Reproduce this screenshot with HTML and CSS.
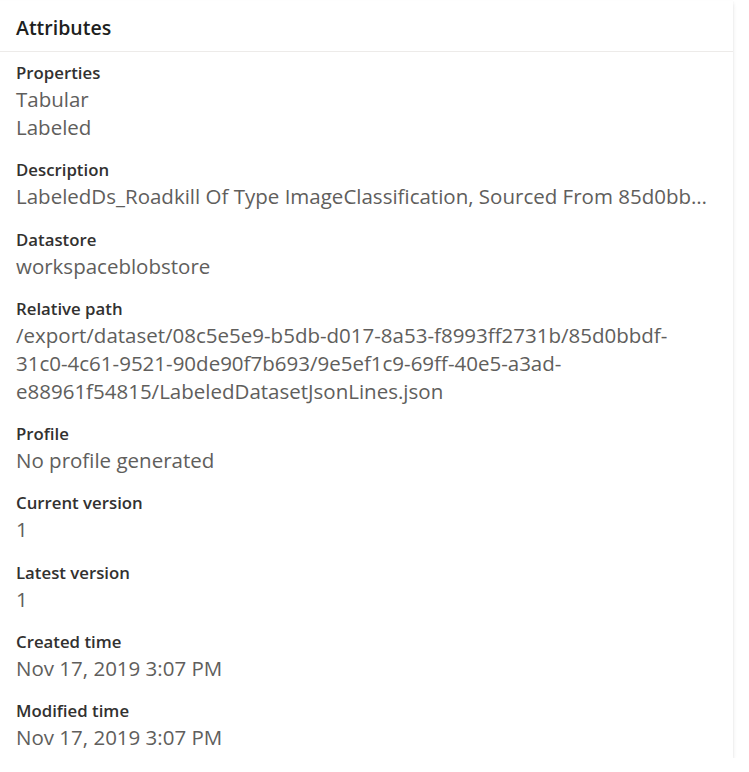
FILE: index.html
```html
<!DOCTYPE html>
<html lang="en">
<head>
<meta charset="utf-8">
<title>Attributes</title>
<link rel="stylesheet" href="styles.css">
</head>
<body>
<section class="card">
  <header class="card-header">
    <h2 class="card-title">Attributes</h2>
  </header>
  <div class="card-body">
    <div class="field">
      <div class="field-label">Properties</div>
      <div class="field-value">Tabular</div>
      <div class="field-value">Labeled</div>
    </div>
    <div class="field">
      <div class="field-label">Description</div>
      <div class="field-value truncate">LabeledDs_Roadkill Of Type ImageClassification, Sourced From 85d0bbdf-31c0-4c61-9521-90de90f7b693</div>
    </div>
    <div class="field">
      <div class="field-label">Datastore</div>
      <div class="field-value">workspaceblobstore</div>
    </div>
    <div class="field">
      <div class="field-label">Relative path</div>
      <div class="field-value path">/export/dataset/08c5e5e9-b5db-d017-8a53-f8993ff2731b/85d0bbdf-31c0-4c61-9521-90de90f7b693/9e5ef1c9-69ff-40e5-a3ad-e88961f54815/LabeledDatasetJsonLines.json</div>
    </div>
    <div class="field">
      <div class="field-label">Profile</div>
      <div class="field-value">No profile generated</div>
    </div>
    <div class="field">
      <div class="field-label">Current version</div>
      <div class="field-value">1</div>
    </div>
    <div class="field">
      <div class="field-label">Latest version</div>
      <div class="field-value">1</div>
    </div>
    <div class="field">
      <div class="field-label">Created time</div>
      <div class="field-value">Nov 17, 2019 3:07 PM</div>
    </div>
    <div class="field">
      <div class="field-label">Modified time</div>
      <div class="field-value">Nov 17, 2019 3:07 PM</div>
    </div>
  </div>
</section>
</body>
</html>
```

FILE: styles.css
```css
html, body {
  margin: 0;
  padding: 0;
  background: #ffffff;
}

body {
  font-family: "Segoe UI", "Open Sans", "Noto Sans", sans-serif;
  padding-top: 1px;
}

.card {
  width: 733px;
  background: #ffffff;
  box-shadow: 0 1.6px 3.6px rgba(0, 0, 0, 0.13), 0 0.3px 0.9px rgba(0, 0, 0, 0.11);
}

.card-header {
  height: 50px;
  display: flex;
  align-items: center;
  padding: 0 16px;
  border-bottom: 1px solid #edebe9;
}

.card-title {
  margin: 0;
  font-size: 19.5px;
  font-weight: 600;
  color: #201f1e;
  line-height: 26px;
  padding-top: 4px;
}

.card-body {
  padding: 10px 16px 8px;
  display: flex;
  flex-direction: column;
  gap: 19.25px;
}

.field-label {
  font-size: 16.8px;
  font-weight: 600;
  line-height: 22px;
  color: #323130;
}

.field-value {
  font-size: 20.5px;
  line-height: 28px;
  color: #605e5c;
  overflow-wrap: break-word;
  padding-top: 1px;
  margin-bottom: -1px;
}

.path {
  max-width: 690px;
}

.truncate {
  white-space: nowrap;
  overflow: hidden;
  text-overflow: ellipsis;
}
```
